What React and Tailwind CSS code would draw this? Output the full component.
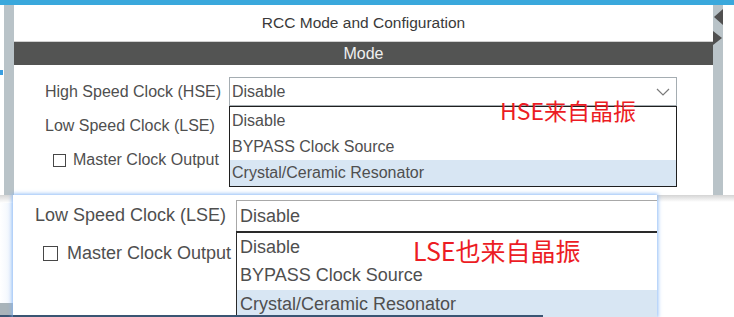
import React from "react";

const HSE_OPTIONS = ["Disable", "BYPASS Clock Source", "Crystal/Ceramic Resonator"];

const Chevron = () => (
  <svg width="14" height="8" viewBox="0 0 14 8" fill="none">
    <polyline points="1,1 7,7 13,1" stroke="#7a7a7a" strokeWidth="1.2" />
  </svg>
);

const App = () => {
  return (
    <div className="relative w-[734px] h-[317px] overflow-hidden bg-white font-['Liberation_Sans',Arial,sans-serif] text-[#4f4f4f]">
      {/* window top bar */}
      <div className="h-[5px] bg-[#3aa8dc]" />

      {/* upper screenshot: RCC panel */}
      <div className="flex h-[190px]">
        <div className="w-[4px] relative">
          <div className="absolute left-0 top-[65px] w-[3px] h-[5px] bg-[#3a9ee0]" />
        </div>
        <div className="w-[10px] bg-[#b9c3c8]" />

        <div className="w-[699px] flex flex-col">
          <div className="h-[36px] flex items-center justify-center text-[15.5px] text-[#3a3a3a]">
            RCC Mode and Configuration
          </div>
          <div className="h-px bg-[#d0d0d0]" />
          <div className="h-[23px] bg-[#535453] text-[#f0f0f0] text-[16px] flex items-center justify-center">
            Mode
          </div>

          <div className="flex flex-col pt-[12px] text-[16px]">
            <div className="flex items-center h-[29px]">
              <div className="pl-[31px] w-[215px] shrink-0">High Speed Clock (HSE)</div>
              <div className="relative w-[448px] h-[29px]">
                <div className="h-full border border-[#a5adb2] flex items-center justify-between pl-[2px] pr-[6px]">
                  <span>Disable</span>
                  <Chevron />
                </div>
                <div className="absolute left-0 top-full w-full border border-[#1f1f1f] bg-white">
                  <div className="h-[27px] flex items-center pl-[2px]">{HSE_OPTIONS[0]}</div>
                  <div className="h-[26px] flex items-center pl-[2px]">{HSE_OPTIONS[1]}</div>
                  <div className="h-[26px] flex items-center pl-[2px] bg-[#d8e6f3]">{HSE_OPTIONS[2]}</div>
                </div>
              </div>
            </div>
            <div className="flex items-center h-[40px]">
              <div className="pl-[31px]">Low Speed Clock (LSE)</div>
            </div>
            <div className="flex items-center h-[28px] pl-[39px] gap-[7px]">
              <div className="w-[13px] h-[13px] border border-[#474747] bg-white" />
              <span>Master Clock Output</span>
            </div>
          </div>
        </div>

        <div className="w-[10px] bg-[#b9c3c8] flex flex-col items-center pt-[4px] gap-[6px]">
          <svg width="10" height="16" viewBox="0 0 10 16">
            <polygon points="10,0 10,16 1,8" fill="#505050" />
          </svg>
          <svg width="10" height="14" viewBox="0 0 10 14">
            <polygon points="0,0 9,7 0,14" fill="#505050" />
          </svg>
        </div>
        <div className="flex-1" />
      </div>

      {/* lower pasted screenshot */}
      <div className="flex h-[122px]">
        <div className="w-[13px] flex flex-col">
          <div className="h-[8px] bg-gradient-to-b from-[#d6d6d6] to-white" />
          <div className="flex-1 bg-gradient-to-r from-white to-[#eef4fc]" />
          <div className="h-[12px] bg-[#a9b4ba]" />
          <div className="h-[2px] bg-[#3a5573]" />
        </div>

        <div className="relative w-[644px] bg-white shadow-[0_0_4px_1px_rgba(130,180,245,0.9)] text-[18px]">
          <div className="flex pt-[5px] h-[36px]">
            <div className="pl-[22px] w-[223px] shrink-0 flex items-center">Low Speed Clock (LSE)</div>
            <div className="relative flex-1">
              <div className="h-[31px] border-t border-l border-[#a8a8a8] flex items-center pl-[3px]">
                Disable
              </div>
              <div className="absolute left-0 top-full w-full h-[86px] border-t-2 border-l border-[#2a2a2a] bg-white">
                <div className="h-[28px] flex items-center pl-[3px]">{HSE_OPTIONS[0]}</div>
                <div className="h-[29px] flex items-center pl-[3px]">{HSE_OPTIONS[1]}</div>
                <div className="h-[29px] flex items-center pl-[3px] bg-[#d8e6f3]">{HSE_OPTIONS[2]}</div>
              </div>
            </div>
          </div>
          <div className="flex items-center h-[44px] pl-[30px] gap-[9px]">
            <div className="w-[15px] h-[15px] border border-[#474747] bg-white" />
            <span>Master Clock Output</span>
          </div>
          <div className="absolute left-0 bottom-0 w-[530px] h-[2px] bg-[#3a5573]" />
        </div>

        <div className="flex-1 flex flex-col">
          <div className="h-[7px] bg-gradient-to-b from-[#d4d4d4] to-white" />
        </div>
      </div>

      {/* red annotations */}
      <div className="absolute left-[500px] top-[99px] text-[23px] leading-none text-[#ec1c24] font-['Noto_Sans_CJK_SC',sans-serif]">
        HSE来自晶振
      </div>
      <div className="absolute left-[413px] top-[238px] text-[25px] leading-none text-[#ec1c24] font-['Noto_Sans_CJK_SC',sans-serif]">
        LSE也来自晶振
      </div>
    </div>
  );
};

export default App;
